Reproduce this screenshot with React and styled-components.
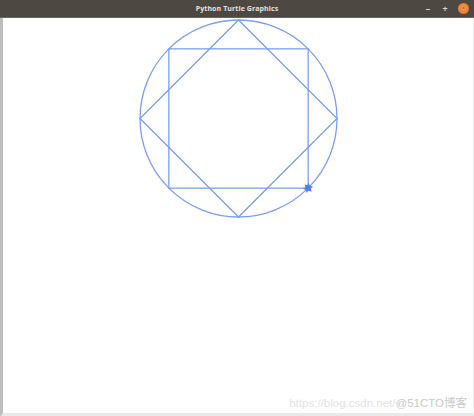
import React from 'react'
import styled, { createGlobalStyle } from 'styled-components'

const Global = createGlobalStyle`
    html, body {
        margin: 0;
        padding: 0;
        background: #ffffff;
    }
    #root {
        width: 474px;
        height: 416px;
    }
`

const Window = styled.div`
    display: flex;
    flex-direction: column;
    width: 474px;
    height: 416px;
    overflow: hidden;
    font-family: "Open Sans", "Noto Sans", sans-serif;
`
const TitleBar = styled.div`
    position: relative;
    display: flex;
    align-items: center;
    justify-content: center;
    height: 17px;
    flex-shrink: 0;
    background: #4e4843;
    border-bottom: 1px solid #6a645e;
`
const Title = styled.span`
    color: #e6e3df;
    font-size: 7px;
    font-weight: 700;
    letter-spacing: 0.1px;
`
const Controls = styled.div`
    position: absolute;
    right: 5px;
    top: 0;
    height: 17px;
    display: flex;
    align-items: center;
    gap: 9px;
`
const Ctrl = styled.span`
    color: #d8d4cf;
    font-size: 9px;
    font-weight: 700;
    width: 8px;
    text-align: center;
    line-height: 17px;
`
const CloseBtn = styled.span`
    width: 11px;
    height: 11px;
    border-radius: 50%;
    background: radial-gradient(circle at 50% 45%, #f6a04e 0%, #e9782c 70%, #d9662a 100%);
    display: flex;
    align-items: center;
    justify-content: center;
    color: #7a3a14;
    font-size: 5px;
    line-height: 1;
`
const Canvas = styled.div`
    position: relative;
    flex: 1;
    display: flex;
    background: #ffffff;
    border-left: 3px solid #bdbdbd;
    border-right: 1px solid #ececec;
    border-bottom: 4px solid #e9e9e9;
`
const Drawing = styled.svg`
    display: block;
`
const Watermark = styled.div`
    position: absolute;
    right: 6px;
    bottom: 3px;
    font-family: "Liberation Sans", "Noto Sans CJK SC", sans-serif;
    font-size: 11.5px;
    white-space: nowrap;
    color: #e2e2e2;
`
const Brand = styled.span`
    color: #c9c9c9;
`

const cx = 238.5
const cy = 118.5
const r = 98.5
const h = r / Math.SQRT2

export default function App() {
    return (
        <Window>
            <Global />
            <TitleBar>
                <Title>Python Turtle Graphics</Title>
                <Controls>
                    <Ctrl>–</Ctrl>
                    <Ctrl>+</Ctrl>
                    <CloseBtn>×</CloseBtn>
                </Controls>
            </TitleBar>
            <Canvas>
                <Drawing width="470" height="395" viewBox="3 18 470 395">
                    <g fill="none" stroke="#7c9ef0" strokeWidth="1.3">
                        <circle cx={cx} cy={cy} r={r} />
                        <polygon points={`${cx},${cy - r} ${cx + r},${cy} ${cx},${cy + r} ${cx - r},${cy}`} />
                        <rect x={cx - h} y={cy - h} width={h * 2} height={h * 2} />
                    </g>
                    <g transform={`translate(${cx + h},${cy + h}) rotate(-45)`} fill="#4f7fef">
                        <polygon points="0,-5 1.5,-2.5 4,-3.5 3,-0.5 4.5,2.5 1.5,2 0,5 -1.5,2 -4.5,2.5 -3,-0.5 -4,-3.5 -1.5,-2.5" />
                        <circle cx="0" cy="0" r="2.6" />
                    </g>
                </Drawing>
                <Watermark>
                    https://blog.csdn.net/<Brand>@51CTO博客</Brand>
                </Watermark>
            </Canvas>
        </Window>
    )
}
